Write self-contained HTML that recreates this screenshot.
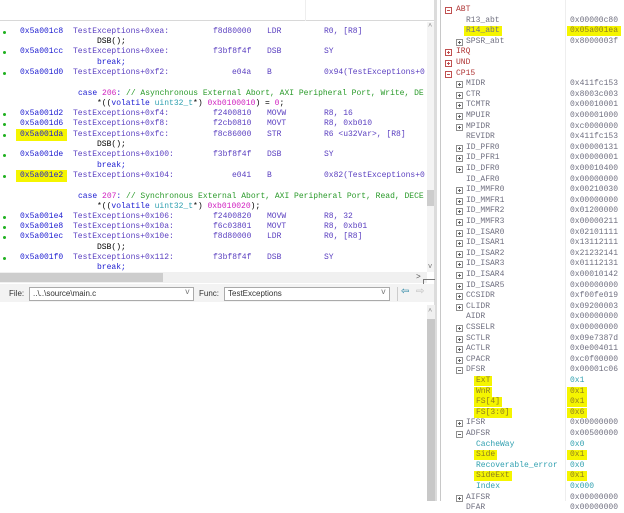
<!DOCTYPE html>
<html><head><meta charset="utf-8"><style>
*{margin:0;padding:0;box-sizing:border-box}
body{width:624px;height:501px;background:#fff;position:relative;overflow:hidden;font-family:"Liberation Mono",monospace;font-size:8px}
.a{position:absolute;white-space:pre;line-height:10px}
.b{color:#1b1bd0}.p{color:#5a3fc0}.g{color:#2a9a2a}.m{color:#d020c0}
.dot{position:absolute;width:3px;height:3px;background:#20b020;border-radius:50%}
.hl{background:#f5f500}
.r{color:#707080}.rd{color:#b03838}.t{color:#30a0b0}
.pm{position:absolute;width:7px;height:7px;border:1px solid #909090;background:#fff}
.pm:after{content:"";position:absolute;left:1px;top:2px;width:3px;height:1px;background:#606060}
.pm.plus:before{content:"";position:absolute;left:2px;top:1px;width:1px;height:3px;background:#606060}
.pm.red{border-color:#c05050}.pm.red:after,.pm.red:before{background:#c05050}
</style></head><body>
<div style="position:absolute;left:0;top:0;width:434px;height:21px;background:#fff;border-bottom:1px solid #d8d8d8"></div>
<div style="position:absolute;left:305px;top:0;width:1px;height:21px;background:#eee"></div>
<div style="position:absolute;left:427px;top:22px;width:8px;height:250px;background:#f4f4f4"></div>
<div style="position:absolute;left:427px;top:190px;width:8px;height:16px;background:#cdcdcd"></div>
<div class="a" style="left:428px;top:22px;color:#777;font-size:7px">^</div>
<div class="a" style="left:428px;top:262px;color:#777;font-size:7px">v</div>
<div style="position:absolute;left:434px;top:0;width:3px;height:501px;background:#dcdcdc"></div>
<div style="position:absolute;left:0;top:272px;width:427px;height:11px;background:#f0f0f0"></div>
<div style="position:absolute;left:0;top:273px;width:163px;height:9px;background:#cdcdcd"></div>
<div class="a" style="left:416px;top:273px;color:#555">&gt;</div>
<div style="position:absolute;left:423px;top:279px;width:12px;height:8px;border-left:1px solid #777;border-top:1px solid #777"></div>
<div style="position:absolute;left:0;top:284px;width:434px;height:18px;background:#f3f3f3"></div>
<div class="a" style="left:9px;top:289px;font-family:'Liberation Sans';font-size:8px;color:#333">File:</div>
<div style="position:absolute;left:29px;top:287px;width:165px;height:14px;background:#fff;border:1px solid #aaa"></div>
<div class="a" style="left:33px;top:289px;font-family:'Liberation Sans';font-size:8px;color:#333">..\..\source\main.c</div>
<div class="a" style="left:185px;top:288px;color:#777">v</div>
<div class="a" style="left:199px;top:289px;font-family:'Liberation Sans';font-size:8px;color:#333">Func:</div>
<div style="position:absolute;left:224px;top:287px;width:166px;height:14px;background:#fff;border:1px solid #aaa"></div>
<div class="a" style="left:228px;top:289px;font-family:'Liberation Sans';font-size:8px;color:#333">TestExceptions</div>
<div class="a" style="left:381px;top:288px;color:#777">v</div>
<div style="position:absolute;left:397px;top:287px;width:1px;height:14px;background:#ccc"></div>
<div class="a" style="left:401px;top:288px;color:#2080a0;font-size:10px">⇦</div>
<div class="a" style="left:416px;top:288px;color:#bbb;font-size:10px">⇨</div>
<div style="position:absolute;left:427px;top:305px;width:8px;height:196px;background:#c8c8c8"></div>
<div style="position:absolute;left:427px;top:305px;width:8px;height:14px;background:#f0f0f0"></div>
<div class="a" style="left:428px;top:307px;color:#777;font-size:7px">^</div>

<div class="dot" style="left:3px;top:31px"></div><div class="a b" style="left:20px;top:27px">0x5a001c8</div><div class="a p" style="left:73px;top:27px">TestExceptions+0xea:</div><div class="a p" style="left:213px;top:27px">f8d80000</div><div class="a p" style="left:267px;top:27px">LDR</div><div class="a p" style="left:324px;top:27px">R0, [R8]</div>
<div class="a" style="left:97px;top:37px">DSB();</div>
<div class="dot" style="left:3px;top:51px"></div><div class="a b" style="left:20px;top:47px">0x5a001cc</div><div class="a p" style="left:73px;top:47px">TestExceptions+0xee:</div><div class="a p" style="left:213px;top:47px">f3bf8f4f</div><div class="a p" style="left:267px;top:47px">DSB</div><div class="a p" style="left:324px;top:47px">SY</div>
<div class="a b" style="left:97px;top:58px">break;</div>
<div class="dot" style="left:3px;top:72px"></div><div class="a b" style="left:20px;top:68px">0x5a001d0</div><div class="a p" style="left:73px;top:68px">TestExceptions+0xf2:</div><div class="a p" style="left:232px;top:68px">e04a</div><div class="a p" style="left:267px;top:68px">B</div><div class="a p" style="left:324px;top:68px">0x94(TestExceptions+0</div>
<div class="a" style="left:78px;top:89px"><span class="b">case </span><span class="m">206</span><span class="b">: </span><span class="g">// Asynchronous External Abort, AXI Peripheral Port, Write, DE</span></div>
<div class="a" style="left:97px;top:99px">*((<span class="b">volatile</span> <span class="t">uint32_t</span>*) <span class="m">0xb0100010</span>) = <span class="m">0</span>;</div>
<div class="dot" style="left:3px;top:113px"></div><div class="a b" style="left:20px;top:109px">0x5a001d2</div><div class="a p" style="left:73px;top:109px">TestExceptions+0xf4:</div><div class="a p" style="left:213px;top:109px">f2400810</div><div class="a p" style="left:267px;top:109px">MOVW</div><div class="a p" style="left:324px;top:109px">R8, 16</div>
<div class="dot" style="left:3px;top:123px"></div><div class="a b" style="left:20px;top:119px">0x5a001d6</div><div class="a p" style="left:73px;top:119px">TestExceptions+0xf8:</div><div class="a p" style="left:213px;top:119px">f2cb0810</div><div class="a p" style="left:267px;top:119px">MOVT</div><div class="a p" style="left:324px;top:119px">R8, 0xb010</div>
<div class="dot" style="left:3px;top:134px"></div><div class="a b hl" style="left:16px;top:129px;padding:1px 4px">0x5a001da</div><div class="a p" style="left:73px;top:130px">TestExceptions+0xfc:</div><div class="a p" style="left:213px;top:130px">f8c86000</div><div class="a p" style="left:267px;top:130px">STR</div><div class="a p" style="left:324px;top:130px">R6 &lt;u32Var&gt;, [R8]</div>
<div class="a" style="left:97px;top:140px">DSB();</div>
<div class="dot" style="left:3px;top:154px"></div><div class="a b" style="left:20px;top:150px">0x5a001de</div><div class="a p" style="left:73px;top:150px">TestExceptions+0x100:</div><div class="a p" style="left:213px;top:150px">f3bf8f4f</div><div class="a p" style="left:267px;top:150px">DSB</div><div class="a p" style="left:324px;top:150px">SY</div>
<div class="a b" style="left:97px;top:161px">break;</div>
<div class="dot" style="left:3px;top:175px"></div><div class="a b hl" style="left:16px;top:170px;padding:1px 4px">0x5a001e2</div><div class="a p" style="left:73px;top:171px">TestExceptions+0x104:</div><div class="a p" style="left:232px;top:171px">e041</div><div class="a p" style="left:267px;top:171px">B</div><div class="a p" style="left:324px;top:171px">0x82(TestExceptions+0</div>
<div class="a" style="left:78px;top:192px"><span class="b">case </span><span class="m">207</span><span class="b">: </span><span class="g">// Synchronous External Abort, AXI Peripheral Port, Read, DECE</span></div>
<div class="a" style="left:97px;top:202px">*((<span class="b">volatile</span> <span class="t">uint32_t</span>*) <span class="m">0xb010020</span>);</div>
<div class="dot" style="left:3px;top:216px"></div><div class="a b" style="left:20px;top:212px">0x5a001e4</div><div class="a p" style="left:73px;top:212px">TestExceptions+0x106:</div><div class="a p" style="left:213px;top:212px">f2400820</div><div class="a p" style="left:267px;top:212px">MOVW</div><div class="a p" style="left:324px;top:212px">R8, 32</div>
<div class="dot" style="left:3px;top:226px"></div><div class="a b" style="left:20px;top:222px">0x5a001e8</div><div class="a p" style="left:73px;top:222px">TestExceptions+0x10a:</div><div class="a p" style="left:213px;top:222px">f6c03801</div><div class="a p" style="left:267px;top:222px">MOVT</div><div class="a p" style="left:324px;top:222px">R8, 0xb01</div>
<div class="dot" style="left:3px;top:236px"></div><div class="a b" style="left:20px;top:232px">0x5a001ec</div><div class="a p" style="left:73px;top:232px">TestExceptions+0x10e:</div><div class="a p" style="left:213px;top:232px">f8d80000</div><div class="a p" style="left:267px;top:232px">LDR</div><div class="a p" style="left:324px;top:232px">R0, [R8]</div>
<div class="a" style="left:97px;top:243px">DSB();</div>
<div class="dot" style="left:3px;top:257px"></div><div class="a b" style="left:20px;top:253px">0x5a001f0</div><div class="a p" style="left:73px;top:253px">TestExceptions+0x112:</div><div class="a p" style="left:213px;top:253px">f3bf8f4f</div><div class="a p" style="left:267px;top:253px">DSB</div><div class="a p" style="left:324px;top:253px">SY</div>
<div class="a b" style="left:97px;top:263px">break;</div>

<div style="position:absolute;left:440px;top:0;width:1px;height:501px;background:#c8c8c8"></div>
<div style="position:absolute;left:565px;top:0;width:1px;height:501px;background:#eee"></div>
<div id="reg"></div>
<script>
var rows=[
["rd","ABT","",1,"m"],["r","R13_abt","0x00000c80",2,""],["r","R14_abt","0x05a001ea",2,"",1,1],["r","SPSR_abt","0x8000003f",2,"p"],
["rd","IRQ","",1,"p"],["rd","UND","",1,"p"],["rd","CP15","",1,"m"],
["r","MIDR","0x411fc153",2,"p"],["r","CTR","0x8003c003",2,"p"],["r","TCMTR","0x00010001",2,"p"],["r","MPUIR","0x00001000",2,"p"],["r","MPIDR","0xc0000000",2,"p"],["r","REVIDR","0x411fc153",2,""],
["r","ID_PFR0","0x00000131",2,"p"],["r","ID_PFR1","0x00000001",2,"p"],["r","ID_DFR0","0x00010400",2,"p"],["r","ID_AFR0","0x00000000",2,""],
["r","ID_MMFR0","0x00210030",2,"p"],["r","ID_MMFR1","0x00000000",2,"p"],["r","ID_MMFR2","0x01200000",2,"p"],["r","ID_MMFR3","0x00000211",2,"p"],
["r","ID_ISAR0","0x02101111",2,"p"],["r","ID_ISAR1","0x13112111",2,"p"],["r","ID_ISAR2","0x21232141",2,"p"],["r","ID_ISAR3","0x01112131",2,"p"],["r","ID_ISAR4","0x00010142",2,"p"],["r","ID_ISAR5","0x00000000",2,"p"],
["r","CCSIDR","0xf00fe019",2,"p"],["r","CLIDR","0x09200003",2,"p"],["r","AIDR","0x00000000",2,""],["r","CSSELR","0x00000000",2,"p"],["r","SCTLR","0x09e7387d",2,"p"],
["r","ACTLR","0x0e004011",2,"p"],["r","CPACR","0xc0f00000",2,"p"],["r","DFSR","0x00001c06",2,"m"],
["t","ExT","0x1",3,"",1,0],["t","WnR","0x1",3,"",1,1],["t","FS[4]","0x1",3,"",1,1],["t","FS[3:0]","0x6",3,"",1,1],
["r","IFSR","0x00000000",2,"p"],["r","ADFSR","0x00500000",2,"m"],
["t","CacheWay","0x0",3,""],["t","Side","0x1",3,"",1,1],["t","Recoverable_error","0x0",3,""],["t","SideExt","0x1",3,"",1,1],["t","Index","0x000",3,""],
["r","AIFSR","0x00000000",2,"p"],["r","DFAR","0x00000000",2,""]];
var h="";
rows.forEach(function(r,i){
 var y=Math.round(5+i*10.6);
 var nx=r[3]==1?456:(r[3]==2?466:476);
 var bx=r[3]==1?445:456;
 if(r[4]){h+='<div class="pm '+(r[4]=="p"?"plus ":"")+(r[0]=="rd"?"red":"")+'" style="left:'+bx+'px;top:'+(y+2)+'px"></div>';}
 var cls=r[0]; var nameStyle="";
 if(r[5]){cls+=" hl";nameStyle="padding:0 2px;margin-left:-2px;";}
 var ncol=(r[5]&&r[3]==3)?"color:#908020;":"";
 h+='<div class="a '+cls+'" style="left:'+nx+'px;top:'+y+'px;'+nameStyle+ncol+'">'+r[1]+'</div>';
 if(r[2]){var vc=r[0]=="t"?"t":"r";var vs="";if(r[6]){vc+=" hl";vs="padding:0 3px;margin-left:-3px;color:#908020;";}
 h+='<div class="a '+vc+'" style="left:570px;top:'+y+'px;'+vs+'">'+r[2]+'</div>';}
});
document.getElementById("reg").innerHTML=h;
</script>
</body></html>
